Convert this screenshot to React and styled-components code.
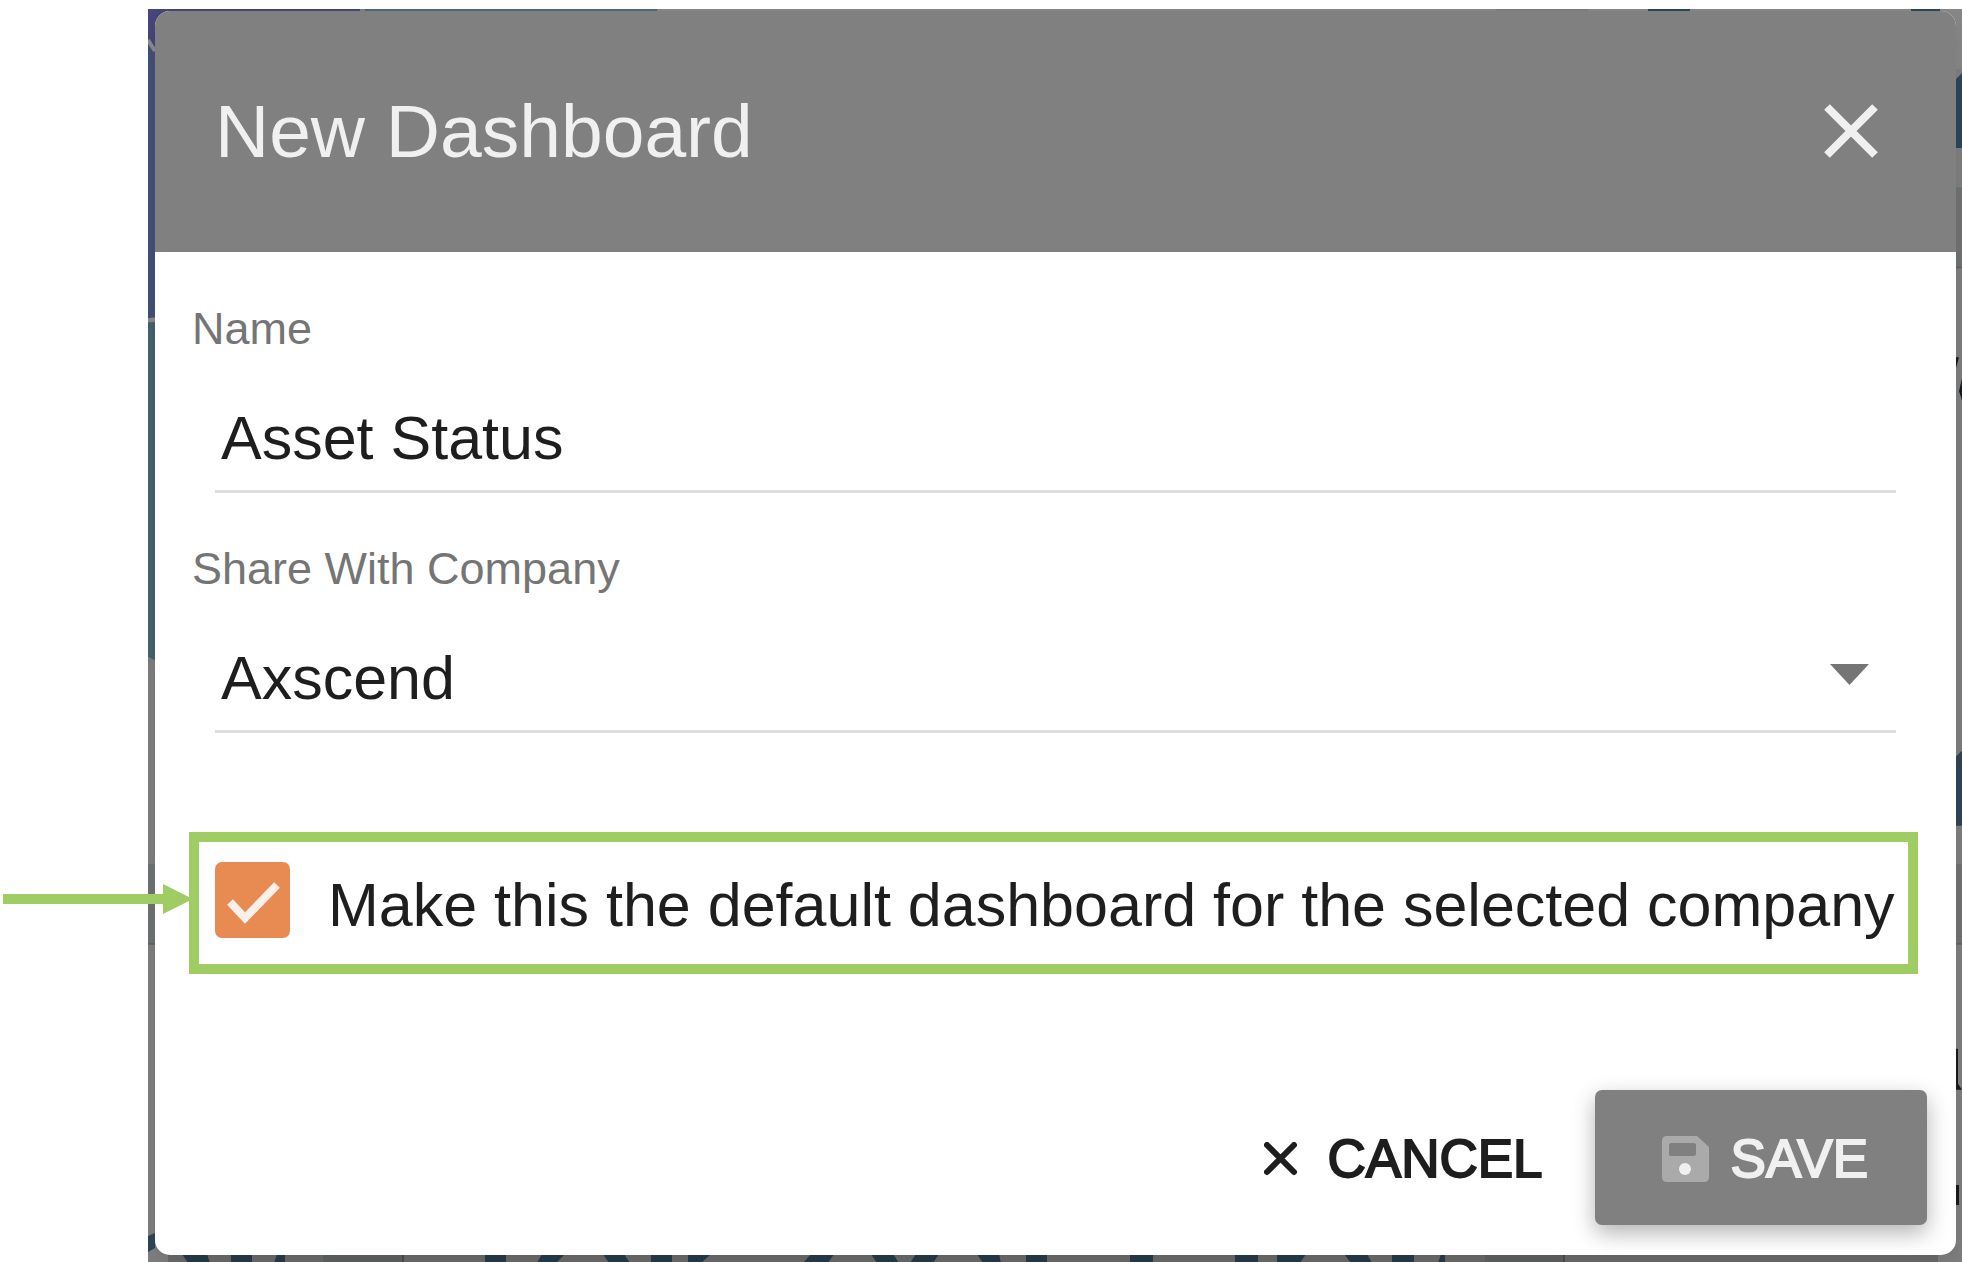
import React, { useState } from "react";
import styled, { createGlobalStyle } from "styled-components";

const GlobalStyle = createGlobalStyle`
  *, *::before, *::after { box-sizing: border-box; }
  body {
    margin: 0;
    background: #ffffff;
    font-family: "Liberation Sans", Arial, Helvetica, sans-serif;
    color: #1e1e1e;
  }
`;

const Page = styled.main`
  min-height: 100vh;
  padding: 9px 0 0 148px;
  display: flex;
`;

const Backdrop = styled.div`
  position: relative;
  flex: 1;
  padding: 2px 6px 8px 7px;
  background: #7f7f7f;
`;

const SceneFrame = styled.div`
  position: absolute;
  inset: 0;
  overflow: hidden;
`;

const Scene = styled.svg`
  display: block;
  width: 100%;
  height: 100%;
`;

const DialogShadow = styled.div`
  position: absolute;
  inset: 2px 6px 8px 7px;
  border-radius: 15px;
  box-shadow: 0 8px 24px rgba(0, 0, 0, 0.1);
`;

const Dialog = styled.section`
  position: relative;
  background: #ffffff;
  border-radius: 15px;
`;

const Header = styled.header`
  height: 241px;
  padding: 0 78px 2px 60px;
  display: flex;
  align-items: center;
  justify-content: space-between;
  background: #808080;
  border-radius: 15px 15px 0 0;
  color: #f0f0f0;
`;

const Title = styled.h1`
  margin: 0;
  font-size: 75px;
  font-weight: 400;
  line-height: 88px;
`;

const CloseButton = styled.button`
  display: flex;
  padding: 0;
  border: 0;
  background: none;
  color: inherit;
  cursor: pointer;
`;

const Body = styled.div`
  padding: 51px 38px 0 34px;
`;

const Fields = styled.div`
  display: grid;
  gap: 50px;
`;

const Field = styled.div`
  display: grid;
  gap: 48px;
`;

const Label = styled.label`
  padding-left: 3px;
  font-size: 45px;
  line-height: 52px;
  color: #757575;
`;

const Control = styled.div`
  display: grid;
  align-items: start;
  margin: 0 22px 0 26px;
  border-bottom: 3px solid #dfdfdf;

  > * { grid-area: 1 / 1; }
`;

const TextBox = styled.input`
  width: 100%;
  height: 87px;
  padding: 0 6px 17px;
  border: 0;
  outline: 0;
  background: none;
  font: 400 61px/70px "Liberation Sans", Arial, sans-serif;
  color: #1e1e1e;
`;

const Select = styled(TextBox).attrs({ as: "select" })`
  appearance: none;
`;

const Caret = styled.svg`
  justify-self: end;
  margin: 21px 27px 0 0;
  pointer-events: none;
`;

const DefaultRow = styled.div`
  position: relative;
  display: flex;
  align-items: flex-start;
  gap: 38px;
  margin-top: 99px;
  padding: 20px 0 16px 16px;
  border: 10px solid #a0cd63;
`;

const Arrow = styled.svg`
  position: absolute;
  top: 42px;
  left: -196px;
`;

const TickBox = styled.span`
  display: grid;
  flex: none;
  width: 75px;
  height: 76px;

  > * { grid-area: 1 / 1; }
  svg { pointer-events: none; }
`;

const Tick = styled.input`
  appearance: none;
  width: 100%;
  height: 100%;
  margin: 0;
  border: 3px solid #e88b53;
  border-radius: 7px;

  &:checked { background: #e88b53; }
  &:not(:checked) + svg { visibility: hidden; }
`;

const TickLabel = styled.label`
  font-size: 61px;
  line-height: 86px;
  white-space: nowrap;
`;

const Footer = styled.footer`
  display: flex;
  justify-content: flex-end;
  gap: 30px;
  padding: 116px 29px 30px;
`;

const Action = styled.button`
  display: flex;
  align-items: center;
  justify-content: center;
  gap: ${(p) => (p.$raised ? 22 : 30)}px;
  height: 135px;
  padding: ${(p) => (p.$raised ? "2px 59px 0 67px" : "2px 22px 0")};
  border: 0;
  border-radius: 7px;
  background: ${(p) => (p.$raised ? "#808080" : "transparent")};
  box-shadow: ${(p) => (p.$raised ? "0 8px 22px rgba(0, 0, 0, 0.3)" : "none")};
  color: ${(p) => (p.$raised ? "#f0f0f0" : "#1e1e1e")};
  font: 400 53px/60px "Liberation Sans", Arial, sans-serif;
  -webkit-text-stroke: 2px currentColor;
  cursor: pointer;
`;

function DashboardScene() {
  return (
    <Scene viewBox="0 0 1814 1253" preserveAspectRatio="none" aria-hidden="true">
      <path d="M0 0H212V4L7 40L0 31Z" fill="#47467d" />
      <path d="M0 31L7 42V309H0Z" fill="#42517a" />
      <path d="M0 31L7 42M0 311L7 310" stroke="#8c8c8c" strokeWidth="4" />
      <path d="M0 313H7V651L0 647Z" fill="#45626f" />
      <path d="M217 0H509V4H217Z" fill="#4a6a7b" />
      <path d="M509 0H1814V20H509Z" fill="#888888" />
      <path d="M1348 0H1440V3H1348Z" fill="#7e7e7e" />
      <path d="M1500 0H1542V3H1500ZM1763 0H1792V3H1763Z" fill="#2d4658" />
      <path d="M1806 20H1814V60H1806Z" fill="#888888" />
      <path d="M1807 71L1814 64V139H1807ZM1807 748L1814 741V816H1807Z" fill="#2d4658" />
      <path d="M0 854H7V933H0ZM1807 178H1814V257H1807ZM1807 854H1814V933H1807Z" fill="#707373" />
      <path d="M0 934H7M1807 258H1814M1807 934H1814" stroke="#656565" strokeWidth="2" />
      <path d="M1807 348H1811L1808 359H1807ZM1814 369L1811 382L1814 391ZM1807 1039H1810V1074L1814 1080H1807ZM1807 1175H1811V1195H1807Z" fill="#171b1d" />
      <path d="M20 1244H1790V1253H20Z" fill="#6b6b6b" />
      <path d="M175 1244H255V1253H175ZM1337 1244H1415V1253H1337Z" fill="#5f6260" />
      <path d="M255 1244V1253M1416 1244V1253" stroke="#4d4d4d" strokeWidth="2" />
      <path d="M0 1226L7 1223V1238L0 1242Z" fill="#2d4658" />
      <path
        d="M34 1244H59L62 1253H40ZM83 1244H104V1253H83ZM129 1244H137V1253H126ZM337 1244H358V1253H337ZM394 1244H417L408 1253H389ZM455 1244H476L482 1253H461ZM503 1244H524V1253H503ZM540 1244H563L553 1253H540ZM663 1244H686L680 1253H655ZM723 1244H745L751 1253H729ZM768 1244H791L785 1253H762ZM829 1244H851L853 1253H835ZM878 1244H899V1253H878ZM982 1244H1005V1253H982ZM1087 1244H1110V1253H1087ZM1129 1244H1158L1152 1253H1129ZM1196 1244H1219L1224 1253H1203ZM1244 1244H1266V1253H1244ZM1293 1244H1297V1253H1290Z"
        fill="#263b49"
      />
    </Scene>
  );
}

export default function App() {
  const [name, setName] = useState("Asset Status");
  const [company, setCompany] = useState("Axscend");
  const [isDefault, setIsDefault] = useState(true);

  return (
    <>
      <GlobalStyle />
      <Page>
        <Backdrop>
          <SceneFrame>
            <DashboardScene />
            <DialogShadow />
          </SceneFrame>
          <Dialog role="dialog" aria-labelledby="dialog-title">
            <Header>
              <Title id="dialog-title">New Dashboard</Title>
              <CloseButton type="button" aria-label="Close">
                <svg width="54" height="54" viewBox="0 0 54 54">
                  <path d="M3 3L51 51M51 3L3 51" stroke="currentColor" strokeWidth="8" />
                </svg>
              </CloseButton>
            </Header>
            <Body>
              <Fields>
                <Field>
                  <Label htmlFor="name">Name</Label>
                  <Control>
                    <TextBox id="name" value={name} onChange={(e) => setName(e.target.value)} />
                  </Control>
                </Field>
                <Field>
                  <Label htmlFor="company">Share With Company</Label>
                  <Control>
                    <Select id="company" value={company} onChange={(e) => setCompany(e.target.value)}>
                      <option>Axscend</option>
                    </Select>
                    <Caret width="39" height="21" viewBox="0 0 39 21" aria-hidden="true">
                      <path d="M0 0H39L19.5 21Z" fill="#757575" />
                    </Caret>
                  </Control>
                </Field>
              </Fields>
              <DefaultRow>
                <Arrow width="190" height="30" viewBox="0 0 190 30" aria-hidden="true">
                  <path d="M0 10H160V0L190 15L160 30V20H0Z" fill="#a0cd63" />
                </Arrow>
                <TickBox>
                  <Tick
                    type="checkbox"
                    id="default"
                    checked={isDefault}
                    onChange={(e) => setIsDefault(e.target.checked)}
                  />
                  <svg width="75" height="76" viewBox="0 0 75 76" aria-hidden="true">
                    <path d="M15 40L30 56L62 23" fill="none" stroke="#fdf0e8" strokeWidth="8" />
                  </svg>
                </TickBox>
                <TickLabel htmlFor="default">
                  Make this the default dashboard for the selected company
                </TickLabel>
              </DefaultRow>
            </Body>
            <Footer>
              <Action type="button">
                <svg width="34" height="34" viewBox="0 0 34 34" aria-hidden="true">
                  <path d="M3 3L30 30M30 3L3 30" stroke="currentColor" strokeWidth="6" strokeLinecap="round" />
                </svg>
                CANCEL
              </Action>
              <Action type="button" $raised>
                <svg width="47" height="46" viewBox="0 0 47 46" aria-hidden="true">
                  <path
                    fillRule="evenodd"
                    d="M5 0H35L47 11V41Q47 46 42 46H5Q0 46 0 41V5Q0 0 5 0ZM9 7Q7 7 7 9V18Q7 20 9 20H32Q34 20 34 18V9Q34 7 32 7Z"
                    fill="#aaaaaa"
                  />
                  <circle cx="23" cy="33" r="6" fill="#f0f0f0" />
                </svg>
                SAVE
              </Action>
            </Footer>
          </Dialog>
        </Backdrop>
      </Page>
    </>
  );
}
